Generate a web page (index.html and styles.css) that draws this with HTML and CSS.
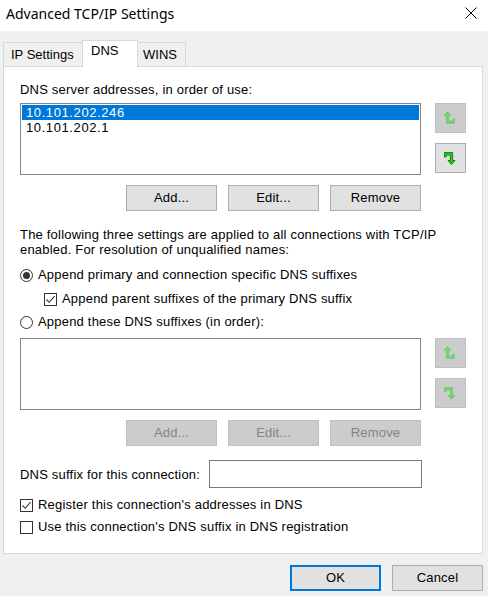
FILE: index.html
```html
<!DOCTYPE html>
<html>
<head>
<meta charset="utf-8">
<link rel="stylesheet" href="styles.css">
</head>
<body>
<div class="window">
  <div class="titlebar">
    <span class="title">Advanced TCP/IP Settings</span>
    <svg class="close" width="12" height="12" viewBox="0 0 12 12"><path d="M0.5 0.5 L11.5 11.5 M11.5 0.5 L0.5 11.5" stroke="#000" stroke-width="1" fill="none"/></svg>
  </div>
  <div class="body">
    <div class="tabs">
      <div class="tab">IP Settings</div>
      <div class="tab active">DNS</div>
      <div class="tab">WINS</div>
    </div>
    <div class="panel">
      <div class="label">DNS server addresses, in order of use:</div>
      <div class="list-row">
        <div class="listbox">
          <div class="item selected">10.101.202.246</div>
          <div class="item">10.101.202.1</div>
        </div>
        <div class="arrows">
          <div class="arrow off"><svg width="11" height="14" viewBox="0 0 11 14"><path class="ico-off" d="M3.5 0.5 L7 4.5 L4.7 4.5 L4.7 10 L8.8 10 L8.8 8 L10.5 8 L10.5 12.5 L2.3 12.5 L2.3 4.5 L0 4.5 Z"/></svg></div>
          <div class="arrow"><svg width="11" height="14" viewBox="0 0 11 14"><path class="ico-on" transform="rotate(180 5.5 7)" d="M3.5 0.5 L7 4.5 L4.7 4.5 L4.7 10 L8.8 10 L8.8 8 L10.5 8 L10.5 12.5 L2.3 12.5 L2.3 4.5 L0 4.5 Z"/></svg></div>
        </div>
      </div>
      <div class="btn-row">
        <div class="btn">Add...</div>
        <div class="btn">Edit...</div>
        <div class="btn">Remove</div>
      </div>
      <p class="info">The following three settings are applied to all connections with TCP/IP<br>enabled. For resolution of unqualified names:</p>
      <div class="opt opt-r1">
        <span class="radio on"></span><span>Append primary and connection specific DNS suffixes</span>
      </div>
      <div class="opt opt-cb1">
        <span class="check"><svg width="11" height="11" viewBox="0 0 11 11"><path d="M1.5 5.5 L4.2 8.3 L9.6 2.2" stroke="#333" stroke-width="1.1" fill="none"/></svg></span><span>Append parent suffixes of the primary DNS suffix</span>
      </div>
      <div class="opt opt-r2">
        <span class="radio"></span><span>Append these DNS suffixes (in order):</span>
      </div>
      <div class="list-row list-row2">
        <div class="listbox"></div>
        <div class="arrows">
          <div class="arrow off"><svg width="11" height="14" viewBox="0 0 11 14"><path class="ico-off" d="M3.5 0.5 L7 4.5 L4.7 4.5 L4.7 10 L8.8 10 L8.8 8 L10.5 8 L10.5 12.5 L2.3 12.5 L2.3 4.5 L0 4.5 Z"/></svg></div>
          <div class="arrow off"><svg width="11" height="14" viewBox="0 0 11 14"><path class="ico-off" transform="rotate(180 5.5 7)" d="M3.5 0.5 L7 4.5 L4.7 4.5 L4.7 10 L8.8 10 L8.8 8 L10.5 8 L10.5 12.5 L2.3 12.5 L2.3 4.5 L0 4.5 Z"/></svg></div>
        </div>
      </div>
      <div class="btn-row">
        <div class="btn disabled">Add...</div>
        <div class="btn disabled">Edit...</div>
        <div class="btn disabled">Remove</div>
      </div>
      <div class="suffix-row">
        <span>DNS suffix for this connection:</span>
        <div class="input"></div>
      </div>
      <div class="opt opt-cb2">
        <span class="check"><svg width="11" height="11" viewBox="0 0 11 11"><path d="M1.5 5.5 L4.2 8.3 L9.6 2.2" stroke="#333" stroke-width="1.1" fill="none"/></svg></span><span>Register this connection's addresses in DNS</span>
      </div>
      <div class="opt opt-cb3">
        <span class="check"></span><span>Use this connection's DNS suffix in DNS registration</span>
      </div>
    </div>
    <div class="footer">
      <div class="btn default">OK</div>
      <div class="btn">Cancel</div>
    </div>
  </div>
</div>
</body>
</html>
```

FILE: styles.css
```css
* { box-sizing: border-box; }
html, body { margin: 0; padding: 0; }
body {
  width: 488px;
  height: 596px;
  background: #f0f0f0;
  font-family: "Liberation Sans", Arial, sans-serif;
  font-size: 13px;
  letter-spacing: 0.2px;
  color: #000;
  overflow: hidden;
}
.window { width: 488px; height: 596px; display: flex; flex-direction: column; }
.titlebar {
  height: 31px;
  background: #fff;
  display: flex;
  align-items: center;
  justify-content: space-between;
  padding: 0 11px 5px 6px;
  letter-spacing: 0;
}
.title { font-family: "Noto Sans", "Open Sans", sans-serif; font-size: 14px; }
.close { display: block; }
.body { padding: 9px 5px 0 3px; display: flex; flex-direction: column; }
.tabs { display: flex; align-items: flex-end; height: 26px; position: relative; z-index: 1; letter-spacing: 0; }
.tab {
  height: 24px;
  border: 1px solid #d9d9d9;
  border-bottom: none;
  background: #f0f0f0;
  line-height: 24px;
  padding-left: 7px;
}
.tab:nth-child(1) { width: 79px; border-right: none; }
.tab:nth-child(3) { width: 48px; padding-left: 5px; border-left: none; }
.tab.active {
  width: 56px;
  height: 27px;
  margin-bottom: -1px;
  background: #fff;
  padding-left: 8px;
  line-height: 20px;
}
.panel {
  height: 488px;
  background: #fff;
  border: 1px solid #d9d9d9;
  padding: 15px 0 0 16px;
  display: flex;
  flex-direction: column;
}
.label { line-height: 16px; height: 16px; }
.list-row { display: flex; margin-top: 5px; gap: 14px; }
.list-row2 { margin-top: 8px; }
.listbox {
  width: 401px;
  height: 72px;
  border: 1px solid #828790;
  padding: 1px;
  background: #fff;
}
.item { height: 15px; line-height: 15px; padding-left: 4px; letter-spacing: 0.6px; }
.item.selected { background: #0078d7; color: #fff; }
.arrows { display: flex; flex-direction: column; gap: 10px; }
.arrow {
  width: 31px;
  height: 30px;
  background: #e1e1e1;
  border: 1px solid #adadad;
  display: flex;
  align-items: center;
  justify-content: center;
  padding-right: 2px;
}
.arrow.off { background: #cccccc; border-color: #bfbfbf; }
.arrow svg { display: block; overflow: visible; }
.ico-on { fill: #17d417; stroke: #0b7d0b; stroke-width: 0.9; }
.ico-off { fill: #6fd46f; stroke: #5cc75c; stroke-width: 0.5; }
.btn-row { display: flex; justify-content: flex-end; gap: 11px; width: 401px; margin-top: 10px; }
.btn {
  width: 91px;
  height: 26px;
  background: #e1e1e1;
  border: 1px solid #adadad;
  display: flex;
  align-items: center;
  justify-content: center;
  padding-bottom: 1px;
}
.btn.disabled { background: #cccccc; border-color: #bfbfbf; color: #838383; }
.btn.default { border: 2px solid #0078d7; }
.info { margin: 16px 0 0 0; line-height: 15px; }
.opt { display: flex; align-items: center; height: 16px; line-height: 16px; gap: 5px; }
.opt-r1 { margin-top: 10px; }
.opt-cb1 { margin-top: 8px; margin-left: 24px; }
.opt-r2 { margin-top: 7px; }
.opt-cb2 { margin-top: 9px; }
.opt-cb3 { margin-top: 6px; }
.radio {
  width: 13px;
  height: 13px;
  border: 1px solid #333;
  border-radius: 50%;
  display: flex;
  align-items: center;
  justify-content: center;
  flex: none;
}
.radio.on::after {
  content: "";
  width: 7px;
  height: 7px;
  border-radius: 50%;
  background: #333;
}
.check {
  width: 13px;
  height: 13px;
  border: 1px solid #333;
  background: #fff;
  display: flex;
  align-items: center;
  justify-content: center;
  flex: none;
}
.check svg { display: block; }
.suffix-row { display: flex; align-items: center; margin-top: 14px; width: 402px; justify-content: space-between; }
.input { width: 213px; height: 28px; border: 1px solid #7a7a7a; background: #fff; }
.footer { display: flex; justify-content: flex-end; gap: 11px; margin-top: 11px; }
```
